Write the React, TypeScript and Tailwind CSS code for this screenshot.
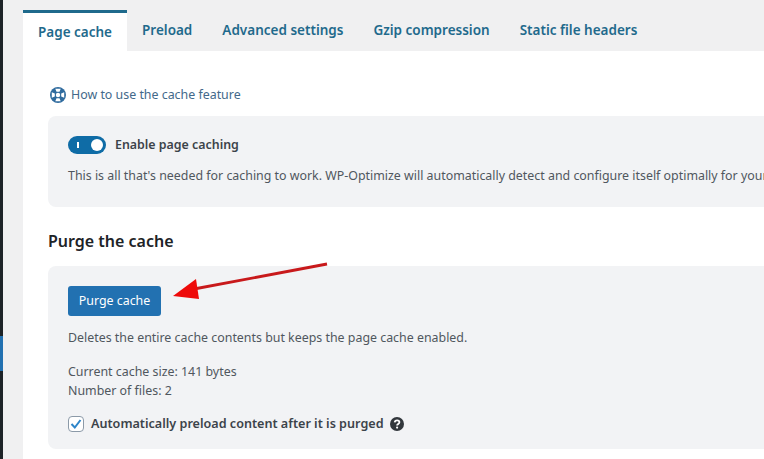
import React from "react";

const tabs = ["Page cache", "Preload", "Advanced settings", "Gzip compression", "Static file headers"];

function Help() {
  return (
    <svg width="14" height="14" viewBox="0 0 14 14" className="ml-[6px]">
      <circle cx="7" cy="7" r="7" fill="#32373c" />
      <path d="M4.700 5.400C4.800 4.100 5.800 3.300 7.100 3.300c1.300 0 2.300.8 2.300 1.900 0 1.700-2.300 1.700-2.300 3.300" fill="none" stroke="#fff" strokeWidth="1.800" />
      <circle cx="7.100" cy="10.600" r="1.100" fill="#fff" />
    </svg>
  );
}

function LifeRing() {
  return (
    <svg width="16" height="16" viewBox="0 0 16 16">
      <circle cx="8" cy="8" r="8" fill="#2f6b9e" />
      <path d="M5.300 1.800 L10.700 1.800 L9.500 4.800 L6.500 4.800 Z M5.300 14.200 L10.700 14.200 L9.500 11.200 L6.500 11.200 Z M1.800 5.300 L1.800 10.700 L4.800 9.500 L4.800 6.500 Z M14.200 5.300 L14.200 10.700 L11.200 9.500 L11.200 6.500 Z" fill="#fff" />
      <circle cx="8" cy="8" r="2.200" fill="#fff" />
    </svg>
  );
}

function Arrow() {
  return (
    <svg className="absolute left-[170px] top-[262px]" width="160" height="40" viewBox="0 0 160 40">
      <path d="M157 2 L24 27" stroke="#c8191b" strokeWidth="2.800" fill="none" />
      <path d="M3 34 L26 17 L29 37 Z" fill="#ee0a0a" />
    </svg>
  );
}

export default function App() {
  return (
    <div className="relative flex h-[459px] w-[764px] overflow-hidden bg-[#f0f0f1] font-['Noto_Sans',sans-serif] text-[12.4px] text-[#50575e]">
      <div className="flex w-[3px] shrink-0 flex-col bg-[#1d2327]">
        <div className="h-[336px]" />
        <div className="h-[35px] bg-[#2271b1]" />
      </div>
      <div className="ml-[20px] flex min-w-0 flex-1 flex-col">
        <div className="flex h-[51px] shrink-0 items-end text-[13.5px] font-semibold leading-[41px] text-[#1f6a8c]">
          {tabs.map((t, i) => (
            <div
              key={t}
              className={
                i === 0
                  ? "h-[41px] border-t-[3px] border-[#1f6a8c] bg-white px-[15px] leading-[38px]"
                  : "h-[41px] px-[15px]"
              }
            >
              {t}
            </div>
          ))}
        </div>
        <div className="flex-1 bg-white pl-[25px]">
          <div className="mt-[35px] flex h-[18px] items-center gap-[5px] pl-[2px] text-[#43698a]">
            <LifeRing />
            <span>How to use the cache feature</span>
          </div>
          <div className="mt-[12px] h-[91px] w-[800px] rounded-l-[8px] bg-[#f2f3f5] pl-[20px] pt-[20px]">
            <div className="flex h-[18px] items-center gap-[9px]">
              <div className="relative h-[18px] w-[38px] rounded-full bg-[#0f6ca6]">
                <div className="absolute left-[9px] top-[6px] h-[6px] w-[2px] bg-white" />
                <div className="absolute right-[3px] top-[3px] h-[12px] w-[12px] rounded-full bg-white" />
              </div>
              <span className="font-semibold text-[#3c434a]">Enable page caching</span>
            </div>
            <p className="mt-[13px] whitespace-nowrap leading-[18px]">
              This is all that's needed for caching to work. WP-Optimize will automatically detect and configure itself optimally for your site.
            </p>
          </div>
          <h3 className="mt-[23px] h-[22px] text-[16px] font-semibold leading-[22px] text-[#1d2327]">Purge the cache</h3>
          <div className="mt-[14px] h-[183px] w-[800px] rounded-l-[8px] bg-[#f2f3f5] pl-[20px] pt-[20px]">
            <div className="flex h-[30px] w-[93px] items-center justify-center rounded-[3px] bg-[#2271b1] text-white">Purge cache</div>
            <p className="mt-[13px] leading-[18px]">Deletes the entire cache contents but keeps the page cache enabled.</p>
            <p className="mt-[15px] leading-[19px]">Current cache size: 141 bytes</p>
            <p className="leading-[19px]">Number of files: 2</p>
            <div className="mt-[15px] flex h-[18px] items-center">
              <div className="flex h-[16px] w-[16px] items-center justify-center rounded-[4px] border border-[#8c9aa8] bg-white">
                <svg width="12" height="12" viewBox="0 0 12 12">
                  <path d="M1.500 6 L4.800 9.500 L10.500 2" fill="none" stroke="#2d85c9" strokeWidth="2" />
                </svg>
              </div>
              <span className="ml-[7px] text-[12.6px] font-semibold text-[#3c434a]">Automatically preload content after it is purged</span>
              <Help />
            </div>
          </div>
        </div>
      </div>
      <Arrow />
    </div>
  );
}
